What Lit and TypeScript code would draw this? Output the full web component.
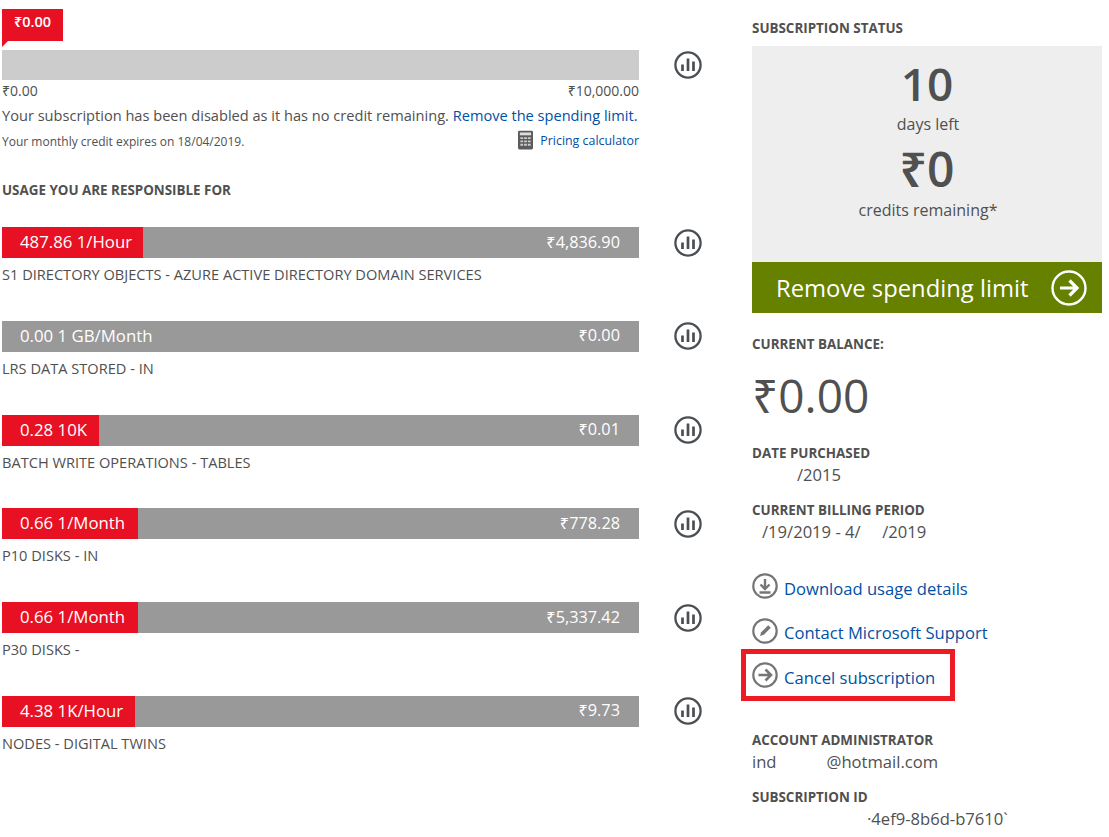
import { LitElement, html, css, svg } from "lit";
import { customElement } from "lit/decorators.js";

const rows = [
  { v: "487.86 1/Hour", w: 141, p: "₹4,836.90", l: "S1 DIRECTORY OBJECTS - AZURE ACTIVE DIRECTORY DOMAIN SERVICES" },
  { v: "0.00 1 GB/Month", w: 0, p: "₹0.00", l: "LRS DATA STORED - IN" },
  { v: "0.28 10K", w: 97, p: "₹0.01", l: "BATCH WRITE OPERATIONS - TABLES" },
  { v: "0.66 1/Month", w: 136, p: "₹778.28", l: "P10 DISKS - IN" },
  { v: "0.66 1/Month", w: 136, p: "₹5,337.42", l: "P30 DISKS -" },
  { v: "4.38 1K/Hour", w: 133, p: "₹9.73", l: "NODES - DIGITAL TWINS" },
];

const chart = html`<svg class="chart" viewBox="0 0 28 28" width="28" height="28">
  <circle cx="14" cy="14" r="12.6" fill="none" stroke="#4a4f54" stroke-width="2.3"></circle>
  <path d="M8.500 13.500v6.500M14 7.500v12.500M19.500 10.500v9.500" fill="none" stroke="#4a4f54" stroke-width="2.7"></path>
</svg>`;

const ring = (inner: unknown) => html`<svg class="ico" viewBox="0 0 26 26" width="26" height="26">
  <circle cx="13" cy="13" r="11.7" fill="none" stroke="#757575" stroke-width="2.2"></circle>${inner}
</svg>`;

@customElement("app-root")
export class AppRoot extends LitElement {
  static styles = css`
    :host { display: block; width: 1109px; height: 837px; overflow: hidden; background: #fff; color: #505050;
      font-family: "Open Sans", "Noto Sans", "DejaVu Sans", sans-serif; }
    .page { display: flex; padding-left: 2px; }
    .left { width: 710px; padding-top: 9px; }
    .right { width: 350px; margin-left: 40px; padding-top: 21px; }
    .tag { position: relative; width: 61px; height: 32px; box-sizing: border-box; background: #e81123; color: #fff;
      font-size: 14.5px; font-weight: 600; padding: 4px 0 0 12px; line-height: 18px; }
    .tag::after { content: ""; position: absolute; left: 0; top: 32px; border-top: 6px solid #e81123; border-right: 6px solid transparent; }
    .limit { display: grid; grid-template-columns: 637px 28px; column-gap: 35px; margin-top: 9px; align-items: center; }
    .track { height: 30px; background: #ccc; }
    .w { width: 637px; }
    .ends { display: flex; justify-content: space-between; font-size: 14px; line-height: 18px; margin-top: 2px; }
    .msg { font-size: 14.6px; line-height: 20px; margin-top: 5px; white-space: nowrap; }
    a { color: #0050a5; text-decoration: none; }
    .exp { display: flex; justify-content: space-between; align-items: center; font-size: 12px; height: 22px; margin-top: 5px; }
    .calc { display: flex; align-items: center; gap: 7px; font-size: 12.4px; margin-bottom: 2px; }
    h3 { margin: 0; font-size: 13.4px; font-weight: 700; color: #505050; line-height: 14px; padding-bottom: 2px; white-space: nowrap; }
    .usage { margin-top: 31px; margin-bottom: 28px; }
    .row { height: 93.8px; display: grid; grid-template-columns: 637px 28px; column-gap: 35px; grid-template-rows: 31px auto; align-items: center; }
    .bar { position: relative; height: 31px; background: #999; display: flex; justify-content: space-between; align-items: center;
      color: #fff; font-size: 16.3px; padding: 0 19px 2px 18px; box-sizing: border-box; white-space: nowrap; }
    .fill { position: absolute; left: 0; top: 0; bottom: 0; background: #e81123; }
    .bar span { position: relative; }
    .bar .qty { font-size: 16.8px; }
    .lab { grid-column: 1; font-size: 14.6px; line-height: 20px; margin-top: 6px; align-self: start; white-space: nowrap; }
    .chart { display: block; }
    .box { background: #eee; height: 216px; margin-top: 9px; text-align: center; box-sizing: border-box; padding-top: 8px; }
    .big { font-size: 46px; line-height: 58px; font-weight: 600; color: #505050; }
    .big.second { margin-top: 5px; font-size: 48px; }
    .sub { font-size: 16px; line-height: 22px; padding-left: 2px; margin-top: 1px; }
    .cta { height: 51px; background: #668000; color: #fff; display: flex; justify-content: space-between; align-items: center; padding: 0 15px 0 24px; font-size: 23.8px; }
    .bal { margin-top: 24px; }
    .amount { font-size: 46px; line-height: 60px; margin-top: 12px; font-weight: 400; color: #505050; }
    .dt { margin-top: 21px; }
    .dt.next { margin-top: 17px; }
    .val { font-size: 16.6px; line-height: 22px; white-space: pre; margin-top: 2px; }
    .purchased { padding-left: 45px; }
    .period { padding-left: 10px; }
    .mail { margin-left: 50px; }
    .sid { padding-left: 115px; }
    .links { margin-top: 23px; display: flex; flex-direction: column; }
    .lk { display: flex; align-items: center; gap: 6px; height: 44.5px; font-size: 16.6px; white-space: nowrap; }
    .ico { flex: none; margin-top: -4px; }
    .hl { position: relative; }
    .hl::before { content: ""; position: absolute; left: -11px; top: -6px; width: 214px; height: 52px; box-sizing: border-box; border: 5px solid #ed1c24; pointer-events: none; }
    .admin { margin-top: 33px; }
    .subid { margin-top: 17px; }
  `;

  render() {
    return html`<div class="page">
      <div class="left">
        <div class="tag">₹0.00</div>
        <div class="limit"><div class="track"></div>${chart}</div>
        <div class="w">
          <div class="ends"><span>₹0.00</span><span>₹10,000.00</span></div>
          <div class="msg">Your subscription has been disabled as it has no credit remaining. <a>Remove the spending limit.</a></div>
          <div class="exp"><span>Your monthly credit expires on 18/04/2019.</span>
            <span class="calc"><svg viewBox="0 0 16 20" width="15" height="20">
              <rect x="0" y="0" width="16" height="20" rx="1.5" fill="#5b5b5b"></rect>
              <rect x="2" y="2" width="12" height="3" fill="#ddd"></rect>
              <path d="M2.500 8h3M6.500 8h3M10.500 8h3M2.500 11.500h3M6.500 11.500h3M10.500 11.500h3M2.500 15h3M6.500 15h3M10.500 15h3" stroke="#ccc" stroke-width="2"></path>
            </svg><a>Pricing calculator</a></span></div>
        </div>
        <h3 class="usage">USAGE YOU ARE RESPONSIBLE FOR</h3>
        ${rows.map(r => html`<div class="row">
          <div class="bar">${r.w ? html`<div class="fill" style="width:${r.w}px"></div>` : ""}<span class="qty">${r.v}</span><span>${r.p}</span></div>
          ${chart}
          <div class="lab">${r.l}</div>
        </div>`)}
      </div>
      <div class="right">
        <h3>SUBSCRIPTION STATUS</h3>
        <div class="box">
          <div class="big">10</div><div class="sub">days left</div>
          <div class="big second">₹0</div><div class="sub">credits remaining*</div>
        </div>
        <div class="cta"><span>Remove spending limit</span>
          <svg viewBox="0 0 36 36" width="36" height="36"><circle cx="18" cy="18" r="16.500" fill="none" stroke="#fff" stroke-width="2.400"></circle>
          <path d="M9 18h17M18.500 10.500L26 18l-7.500 7.500" fill="none" stroke="#fff" stroke-width="3.200"></path></svg></div>
        <h3 class="bal">CURRENT BALANCE:</h3>
        <div class="amount">₹0.00</div>
        <h3 class="dt">DATE PURCHASED</h3>
        <div class="val purchased">/2015</div>
        <h3 class="dt next">CURRENT BILLING PERIOD</h3>
        <div class="val period">/19/2019 - 4/     /2019</div>
        <div class="links">
          <a class="lk">${ring(svg`<path d="M13 6v10M8.500 11.500L13 16l4.500-4.500M7.500 19.500h11" fill="none" stroke="#757575" stroke-width="2.400"></path>`)}Download usage details</a>
          <a class="lk">${ring(svg`<path d="M8 18l1.200-3.800 7-7 2.600 2.600-7 7z" fill="#757575"></path>`)}Contact Microsoft Support</a>
          <a class="lk hl">${ring(svg`<path d="M6.500 13h12.500M13.500 7.500L19 13l-5.500 5.500" fill="none" stroke="#757575" stroke-width="2.600"></path>`)}Cancel subscription</a>
        </div>
        <h3 class="admin">ACCOUNT ADMINISTRATOR</h3>
        <div class="val">ind<span class="mail">@hotmail.com</span></div>
        <h3 class="subid">SUBSCRIPTION ID</h3>
        <div class="val sid">·4ef9-8b6d-b7610\`</div>
      </div>
    </div>`;
  }
}
